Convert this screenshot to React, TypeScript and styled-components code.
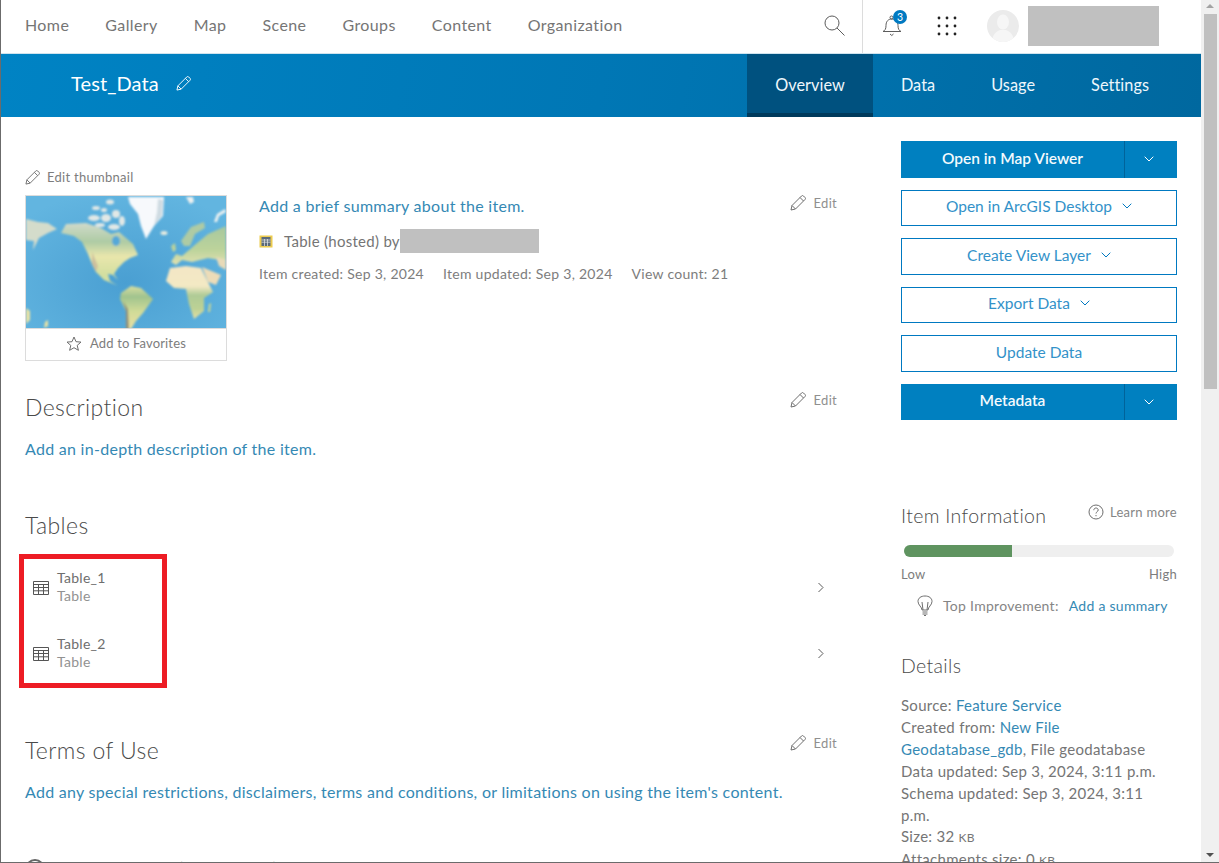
import React from "react";
import styled, { createGlobalStyle } from "styled-components";

const Global = createGlobalStyle`
  html, body { margin: 0; padding: 0; height: 100%; overflow: hidden; background: #fff; }
  #root { height: 100%; }
  * { box-sizing: border-box; }
`;

const Frame = styled.div`
  display: flex; height: 863px; overflow: hidden;
  border-left: 1px solid #6b6b6b; border-bottom: 1px solid #6b6b6b;
  font-family: Lato, "Open Sans", sans-serif; color: #757575; background: #fff; letter-spacing: .28px;
`;
const Page = styled.div`flex: 1; min-width: 0; overflow: hidden;`;
const TopNav = styled.nav`
  height: 54px; display: flex; align-items: center; padding-left: 24px;
  border-bottom: 1px solid #cfe3ee;
`;
const NavLinks = styled.div`display: flex; gap: 36px; flex: 1; padding-bottom: 4px;`;
const NavLink = styled.a`font-size: 16px; color: #757575; line-height: 22px; letter-spacing: .4px;`;
const NavTools = styled.div`display: flex; align-items: center; height: 53px; padding-bottom: 2px;`;
const IconButton = styled.span`display: flex; margin-right: 17px;`;
const ToolsDivider = styled.span`width: 1px; align-self: stretch; margin-bottom: -2px; background: #dcdcdc; margin-right: 19px;`;
const BellWrap = styled.span`position: relative; display: flex; margin-right: 35px;`;
const Badge = styled.span`
  position: absolute; left: 11px; top: -4px; width: 14px; height: 14px; border-radius: 50%;
  background: #0079c1; color: #fff; font-size: 10.500px; line-height: 14px; text-align: center; letter-spacing: 0;
`;
const GridIcon = styled.span`display: flex; margin-right: 30px;`;
const Avatar = styled.span`
  display: flex; width: 32px; height: 32px; border-radius: 50%; overflow: hidden; margin-right: 9px;
`;
const Redaction = styled.span<{ $w: number; $h: number }>`
  display: inline-block; background: #c0c0c0; width: ${p => p.$w}px; height: ${p => p.$h}px;
`;
const UserBlock = styled(Redaction)`margin-right: 42px;`;
const Band = styled.header`
  height: 63px; display: flex; align-items: stretch; justify-content: space-between;
  padding: 0 24px 0 70px; background: linear-gradient(100deg, #0083c4 0%, #0077b5 50%, #00689f 100%);
`;
const Title = styled.div`display: flex; align-items: center; gap: 17px; color: #fff; font-size: 20px; padding-bottom: 5px; letter-spacing: .1px;`;
const Tabs = styled.div`display: flex;`;
const Tab = styled.a<{ $active?: boolean }>`
  display: flex; align-items: center; padding: 2px 28px 0; color: #eef7fc; font-size: 16.300px; letter-spacing: .05px;
  background: ${p => (p.$active ? "#00517f" : "transparent")};
  border-bottom: 4px solid ${p => (p.$active ? "#003a5c" : "transparent")};
`;
const Body = styled.div`display: flex; gap: 64px; padding: 0 24px;`;
const Main = styled.main`width: 812px; flex: none; position: relative;`;
const Side = styled.aside`width: 276px; flex: none; padding-top: 24px;`;

const TopRow = styled.div`display: flex; padding-top: 50px;`;
const ThumbCol = styled.div`width: 202px; flex: none;`;
const EditThumb = styled.div`
  display: flex; align-items: center; gap: 7px; font-size: 13px; line-height: 20px; margin-bottom: 8px; color: #7d7d7d;
`;
const ThumbFrame = styled.div`border: 1px solid #dcdcdc; border-bottom: none; height: 133px; display: flex; overflow: hidden;`;
const Favorites = styled.div`
  height: 33px; padding-bottom: 3px; border: 1px solid #dcdcdc; display: flex; align-items: center; justify-content: center;
  gap: 8px; font-size: 13px; color: #7d7d7d; letter-spacing: .15px;
`;
const SummaryCol = styled.div`flex: 1; margin-left: 32px; padding-top: 28px; display: flex; justify-content: space-between; align-items: flex-start;`;
const SummaryText = styled.div`display: flex; flex-direction: column;`;
const BodyLink = styled.a`display: block; font-size: 16px; line-height: 22px; color: #3589b4;`;
const OwnerRow = styled.div`display: flex; align-items: center; margin-top: 13px; font-size: 15px; line-height: 22px; height: 22px; color: #757575;`;
const TypeIcon = styled.span`display: flex; margin-right: 10px;`;
const Dates = styled.div`display: flex; gap: 19px; margin-top: 11px; font-size: 14px; line-height: 22px; color: #7d7d7d;`;
const EditBtn = styled.div`
  display: flex; align-items: center; gap: 8px; font-size: 13px; line-height: 20px; color: #8f8f8f; margin-top: -2px;
`;
const SectionHead = styled.div<{ $mt: number }>`
  display: flex; justify-content: space-between; align-items: flex-start; margin-top: ${p => p.$mt}px;
`;
const Heading = styled.h2`margin: 0; font-size: 23px; font-weight: 300; line-height: 30px; color: #4a4a4a; letter-spacing: .4px;`;
const SectionLink = styled(BodyLink)`margin-top: 16px;`;
const RowList = styled.div`margin-top: 14px;`;
const TableRow = styled.div`
  height: 66px; padding: 15px 12px 0 8px; display: flex; align-items: flex-start; gap: 8px;
`;
const RowIcon = styled.span`display: flex; margin-top: 12px;`;
const RowText = styled.div`flex: 1;`;
const RowName = styled.div`font-size: 14px; line-height: 18px; color: #6e6e6e;`;
const RowType = styled.div`font-size: 14px; line-height: 18px; color: #929292;`;
const RowChevron = styled.span`display: flex; margin-top: 13px;`;
const Annotation = styled.div`
  position: absolute; left: -6px; top: 437px; width: 148px; height: 134px; border: 5px solid #ed1c24; pointer-events: none;
`;
const NextHead = styled.div`margin-top: 56px; display: flex; align-items: flex-start; gap: 70px; height: 30px;`;
const NextDot = styled.span`width: 20px; height: 20px; border-radius: 50%; border: 2px solid #666; display: block;`;
const NextText = styled.span`font-size: 18px; line-height: 18px; color: #757575;`;

const SplitButton = styled.div`display: flex; height: 36.5px; background: #0080c0; color: #fff; margin-bottom: 12px; letter-spacing: 0;`;
const SplitMain = styled.div`
  width: 224px; padding-bottom: 3px; display: flex; align-items: center; justify-content: center; font-size: 15.500px; font-weight: 600;
  border-right: 1px solid #00639a; color: #f4fafd;
`;
const SplitCaret = styled.div`flex: 1; padding-right: 4px; display: flex; align-items: center; justify-content: center;`;
const OutlineButton = styled.div`
  height: 36.5px; padding-bottom: 3px; border: 1px solid #0079c1; color: #3392c9; font-size: 15.500px; letter-spacing: 0; display: flex;
  align-items: center; justify-content: center; gap: 10px; margin-bottom: 12px;
`;
const InfoHead = styled.div`display: flex; justify-content: space-between; align-items: flex-start; margin-top: 82px;`;
const SideHeading = styled.h3`margin: 0; font-size: 19.500px; font-weight: 300; line-height: 28px; color: #4a4a4a; letter-spacing: .35px;`;
const Learn = styled.div`display: flex; align-items: center; gap: 6px; font-size: 13px; line-height: 20px; color: #858585;`;
const Meter = styled.div`height: 12px; margin: 15px 3px 0; border-radius: 6px; background: #efefef; overflow: hidden;`;
const MeterFill = styled.div`height: 100%; background: #5f9460;`;
const MeterLabels = styled.div`display: flex; justify-content: space-between; margin-top: 8px; font-size: 13px; line-height: 18px; color: #7d7d7d;`;
const Improve = styled.div`display: flex; align-items: center; margin: 11px 0 0 16px; height: 22px; font-size: 14px; color: #858585;`;
const BulbIcon = styled.span`display: flex; margin-right: 10px;`;
const ImproveLink = styled.a`margin-left: 10px; color: #3589b4;`;
const DetailsHead = styled(SideHeading)`margin-top: 36px;`;
const Details = styled.div`margin-top: 15px; font-size: 15px; line-height: 21.9px; color: #757575;`;
const DetailLink = styled.a`color: #3589b4;`;
const Small = styled.span`font-size: 12px;`;

const Scrollbar = styled.div`width: 18px; flex: none; background: #f0f0f0; display: flex; flex-direction: column; align-items: center;`;
const ScrollUp = styled.span`
  margin-top: 4px; width: 0; height: 0; border-left: 4px solid transparent; border-right: 4px solid transparent; border-bottom: 4px solid #a3a3a3;
`;
const Thumb = styled.div`width: 13px; height: 375px; margin-top: 6px; background: #c0c0c0;`;
const ScrollDown = styled.span`
  margin-top: auto; margin-bottom: 5px; width: 0; height: 0; border-left: 4px solid transparent; border-right: 4px solid transparent; border-top: 4px solid #505050;
`;

const Pencil = ({ s = 15, c = "#6e6e6e" }: { s?: number; c?: string }) => (
  <svg width={s} height={s} viewBox="0 0 16 16" fill="none" stroke={c} strokeWidth="1">
    <path d="M1 15l1-4.500L11.500 1a1.400 1.400 0 0 1 2 0l1.500 1.500a1.400 1.400 0 0 1 0 2L5.500 14z" />
    <path d="M2 10.500l3.500 3.500M10 2.500l3.500 3.500" />
  </svg>
);
const Caret = ({ c = "#fff", w = 10 }: { c?: string; w?: number }) => (
  <svg width={w} height={6} viewBox="0 0 10 6" fill="none" stroke={c} strokeWidth="1"><path d="M.7.7 5 5 9.300.7" /></svg>
);
const TableGlyph = () => (
  <svg width="16" height="14" viewBox="0 0 16 14" fill="none" stroke="#555" strokeWidth="1">
    <path d="M.5.5h15v13H.5zM.5 3.500h15M.5 6.500h15M.5 9.800h15M5.500 3.500v10M10.500 3.500v10" />
  </svg>
);
const Chevron = () => (
  <svg width="8" height="11" viewBox="0 0 8 11" fill="none" stroke="#5c5c5c" strokeWidth="1"><path d="M1.500 1 6 5.500 1.500 10" /></svg>
);
const ISLANDS: [number, number, number, number][] = [
  [70, 12, 4, 2], [84, 6, 4, 2.500], [78, 14, 3, 2], [68, 22, 6, 3], [80, 22, 5, 4], [90, 18, 4, 4], [96, 25, 3, 5], [88, 31, 6, 3], [74, 29, 5, 2],
];
const WorldMap = () => (
  <svg width="200" height="133" viewBox="0 0 200 133">
    <defs>
      <radialGradient id="sea" cx=".5" cy=".65" r=".7">
        <stop offset="0" stopColor="#4a9fd2" /><stop offset="1" stopColor="#62b5e0" />
      </radialGradient>
      <linearGradient id="na" gradientUnits="userSpaceOnUse" x1="0" y1="26" x2="0" y2="92">
        <stop offset="0" stopColor="#d2dbcd" /><stop offset=".3" stopColor="#aecba4" /><stop offset=".52" stopColor="#e9e6ac" /><stop offset=".8" stopColor="#d3dfa0" />
      </linearGradient>
      <linearGradient id="eu" gradientUnits="userSpaceOnUse" x1="0" y1="26" x2="0" y2="72">
        <stop offset="0" stopColor="#a4c69f" /><stop offset=".6" stopColor="#bcd39b" /><stop offset="1" stopColor="#e8e4b4" />
      </linearGradient>
      <linearGradient id="af" gradientUnits="userSpaceOnUse" x1="0" y1="70" x2="0" y2="123">
        <stop offset="0" stopColor="#f3e6c6" /><stop offset=".38" stopColor="#f3e9c4" /><stop offset=".55" stopColor="#afcb96" /><stop offset=".8" stopColor="#bcd195" /><stop offset="1" stopColor="#e6e0a2" />
      </linearGradient>
      <linearGradient id="sa" gradientUnits="userSpaceOnUse" x1="0" y1="90" x2="0" y2="133">
        <stop offset="0" stopColor="#d8dea0" /><stop offset=".25" stopColor="#a0c38e" /><stop offset=".6" stopColor="#d2dc98" /><stop offset="1" stopColor="#e8dfa4" />
      </linearGradient>
      <filter id="soft" x="-5%" y="-5%" width="110%" height="110%"><feGaussianBlur stdDeviation=".8" /></filter>
    </defs>
    <rect width="200" height="133" fill="url(#sea)" />
    <g filter="url(#soft)">
      <path d="M0 23 12 26l10 1 9 6-9 4-9 5-3 6-3 6 1-9-8-1z" fill="#d4dccb" />
      <path d="M35 37 40 28 60 27 75 32 85 38 93 36 100 42 107 48 112 59 104 62 98 66 92 72 88 78 92 84 87 79 82 78 84 85 92 90 88 88 78 84 70 76 66 68 62 58 56 46 48 40z" fill="url(#na)" />
      <ellipse cx="90" cy="45" rx="4" ry="5" fill="#55a8d8" />
      <path d="M66 56 72 70 70 76 66 68z" fill="#cdbf9d" />
      <path d="M102 1 138 1 137 20 128 30 120 43 115 30 112 18 104 8z" fill="#f7f9fc" />
      <path d="M132 3 137 4 136 20 128 30 131 16z" fill="#cfdbe2" />
      <ellipse cx="138" cy="37" rx="3.500" ry="2" fill="#e6ebe0" />
      <path d="M160 1h7l1 5-4 2z" fill="#eef1f0" />
      {ISLANDS.map(([cx, cy, rx, ry]) => (
        <ellipse key={`${cx}-${cy}`} cx={cx} cy={cy} rx={rx} ry={ry} fill="#e1e8e6" />
      ))}
      <path d="M188 26 191 18 199 13 200 16 193 20 191 26z" fill="#f0f3f2" />
      <path d="M155 45 165 31 178 26 179 32 169 38 164 50 158 50z" fill="#aecba4" />
      <path d="M145 50 149 47 150 54 147 56zM145 66 150 58 156 60 170 48 182 38 200 30 200 66 194 64 182 62 166 66 156 64 150 69z" fill="url(#eu)" />
      <path d="M140 85 144 72 160 70 175 72 180 82 187 96 178 102 178 115 168 123 163 108 160 93 148 92z" fill="url(#af)" />
      <path d="M176 71 195 79 190 89 182 86z" fill="#ecdcb8" />
      <path d="M190 61 200 64 200 74 193 70z" fill="#e8dab8" />
      <path d="M183 108 185 107 184 116 182 116z" fill="#cdd890" />
      <path d="M95 97 105 90 115 92 127 103 117 117 110 125 105 133 100 133 100 115 94 103z" fill="url(#sa)" />
      <path d="M97 105 102 113 103 133 100 133 100 115z" fill="#938f78" />
      <path d="M0 112 4 115 4 124 0 128zM19 126 22 124 22 130 18 132z" fill="#e9e2a4" />
    </g>
  </svg>
);

export default function App() {
  return (
    <>
      <Global />
      <Frame>
        <Page>
          <TopNav>
            <NavLinks>
              {["Home", "Gallery", "Map", "Scene", "Groups", "Content", "Organization"].map(t => (
                <NavLink key={t}>{t}</NavLink>
              ))}
            </NavLinks>
            <NavTools>
              <IconButton>
                <svg width="21" height="21" viewBox="0 0 21 21" fill="none" stroke="#5c5c5c" strokeWidth="1">
                  <circle cx="8" cy="8" r="7" /><path d="M13 13l7.500 7.500" />
                </svg>
              </IconButton>
              <ToolsDivider />
              <BellWrap>
                <svg width="20" height="23" viewBox="0 0 20 23" fill="none" stroke="#5c5c5c" strokeWidth="1">
                  <path d="M1 17.500c2-1 3-2.500 3-6 0-4 2-6.500 6-6.500s6 2.500 6 6.500c0 3.500 1 5 3 6z" />
                  <circle cx="9.500" cy="3.500" r="1.500" />
                  <path d="M8 20l1.800 1.500L11.500 20" />
                </svg>
                <Badge>3</Badge>
              </BellWrap>
              <GridIcon>
                <svg width="20" height="20" viewBox="0 0 20 20" fill="#222">
                  {[2, 10, 18].flatMap(y => [2, 10, 18].map(x => <circle key={`${x}-${y}`} cx={x} cy={y} r="1.400" />))}
                </svg>
              </GridIcon>
              <Avatar>
                <svg width="32" height="32" viewBox="0 0 32 32">
                  <rect width="32" height="32" fill="#ebebeb" />
                  <ellipse cx="16" cy="12" rx="6" ry="7.500" fill="#f6f6f6" />
                  <path d="M5 32c0-8 5-11 8-12h6c3 1 8 4 8 12z" fill="#f6f6f6" />
                </svg>
              </Avatar>
              <UserBlock $w={131} $h={40} />
            </NavTools>
          </TopNav>
          <Band>
            <Title>
              Test_Data
              <Pencil s={15} c="#fff" />
            </Title>
            <Tabs>
              <Tab $active>Overview</Tab>
              <Tab>Data</Tab>
              <Tab>Usage</Tab>
              <Tab>Settings</Tab>
            </Tabs>
          </Band>
          <Body>
            <Main>
              <TopRow>
                <ThumbCol>
                  <EditThumb><Pencil s={15} />Edit thumbnail</EditThumb>
                  <ThumbFrame><WorldMap /></ThumbFrame>
                  <Favorites>
                    <svg width="16" height="15" viewBox="0 0 16 15" fill="none" stroke="#6e6e6e" strokeWidth="1">
                      <path d="M8 1l2 4.700 5 .4-3.800 3.300 1.200 4.900L8 11.700l-4.400 2.600 1.200-4.900L1 6.100l5-.4z" />
                    </svg>
                    Add to Favorites
                  </Favorites>
                </ThumbCol>
                <SummaryCol>
                  <SummaryText>
                    <BodyLink>Add a brief summary about the item.</BodyLink>
                    <OwnerRow>
                      <TypeIcon>
                        <svg width="15" height="13" viewBox="0 0 15 13">
                          <rect x="0.500" y="0.500" width="13" height="12" fill="#eccb4f" />
                          <rect x="2.500" y="2" width="9" height="9" fill="#5a6a7a" />
                          <path d="M2.500 5h9M2.500 7.200h9M5.500 4v7M8.500 4v7" stroke="#e7e7e7" strokeWidth=".7" />
                        </svg>
                      </TypeIcon>
                      Table (hosted) by
                      <Redaction $w={139} $h={24} />
                    </OwnerRow>
                    <Dates>
                      <span>Item created: Sep 3, 2024</span>
                      <span>Item updated: Sep 3, 2024</span>
                      <span>View count: 21</span>
                    </Dates>
                  </SummaryText>
                  <EditBtn><Pencil s={16} />Edit</EditBtn>
                </SummaryCol>
              </TopRow>

              <SectionHead $mt={31}>
                <Heading>Description</Heading>
                <EditBtn><Pencil s={16} />Edit</EditBtn>
              </SectionHead>
              <SectionLink>Add an in-depth description of the item.</SectionLink>

              <SectionHead $mt={50}><Heading>Tables</Heading></SectionHead>
              <RowList>
                {["Table_1", "Table_2"].map(n => (
                  <TableRow key={n}>
                    <RowIcon><TableGlyph /></RowIcon>
                    <RowText>
                      <RowName>{n}</RowName>
                      <RowType>Table</RowType>
                    </RowText>
                    <RowChevron><Chevron /></RowChevron>
                  </TableRow>
                ))}
              </RowList>
              <Annotation />

              <SectionHead $mt={49}>
                <Heading>Terms of Use</Heading>
                <EditBtn><Pencil s={16} />Edit</EditBtn>
              </SectionHead>
              <SectionLink>Add any special restrictions, disclaimers, terms and conditions, or limitations on using the item's content.</SectionLink>
              <NextHead>
                <NextDot />
                <NextText>Credits (Attribution)</NextText>
              </NextHead>
            </Main>
            <Side>
              <SplitButton>
                <SplitMain>Open in Map Viewer</SplitMain>
                <SplitCaret><Caret /></SplitCaret>
              </SplitButton>
              <OutlineButton>Open in ArcGIS Desktop<Caret c="#0079c1" /></OutlineButton>
              <OutlineButton>Create View Layer<Caret c="#0079c1" /></OutlineButton>
              <OutlineButton>Export Data<Caret c="#0079c1" /></OutlineButton>
              <OutlineButton>Update Data</OutlineButton>
              <SplitButton>
                <SplitMain>Metadata</SplitMain>
                <SplitCaret><Caret /></SplitCaret>
              </SplitButton>

              <InfoHead>
                <SideHeading>Item Information</SideHeading>
                <Learn>
                  <svg width="16" height="16" viewBox="0 0 16 16" fill="none" stroke="#6e6e6e" strokeWidth="1">
                    <circle cx="8" cy="8" r="7" />
                    <path d="M5.800 6.200C5.800 4.800 6.800 4 8 4s2.200.8 2.200 2c0 1.700-2.200 1.700-2.200 3.500" />
                    <path d="M8 11v1.200" />
                  </svg>
                  Learn more
                </Learn>
              </InfoHead>
              <Meter><MeterFill style={{ width: "40%" }} /></Meter>
              <MeterLabels><span>Low</span><span>High</span></MeterLabels>
              <Improve>
                <BulbIcon>
                  <svg width="16" height="21" viewBox="0 0 16 21" fill="none" stroke="#6e6e6e" strokeWidth="1">
                    <path d="M5 15c0-3-4-5-4-8.500C1 3 4 1 8 1s7 2 7 5.500C15 10 11 12 11 15z" />
                    <path d="M6 15 5 7M10 15l1-8M5.500 17h5M5.500 19h5M7 20.500h2" />
                  </svg>
                </BulbIcon>
                Top Improvement:
                <ImproveLink>Add a summary</ImproveLink>
              </Improve>

              <DetailsHead>Details</DetailsHead>
              <Details>
                Source: <DetailLink>Feature Service</DetailLink><br />
                Created from: <DetailLink>New File<br />Geodatabase_gdb</DetailLink>, File geodatabase<br />
                Data updated: Sep 3, 2024, 3:11 p.m.<br />
                Schema updated: Sep 3, 2024, 3:11<br />p.m.<br />
                Size: 32 <Small>KB</Small><br />
                Attachments size: 0 <Small>KB</Small>
              </Details>
            </Side>
          </Body>
        </Page>
        <Scrollbar>
          <ScrollUp />
          <Thumb />
          <ScrollDown />
        </Scrollbar>
      </Frame>
    </>
  );
}
